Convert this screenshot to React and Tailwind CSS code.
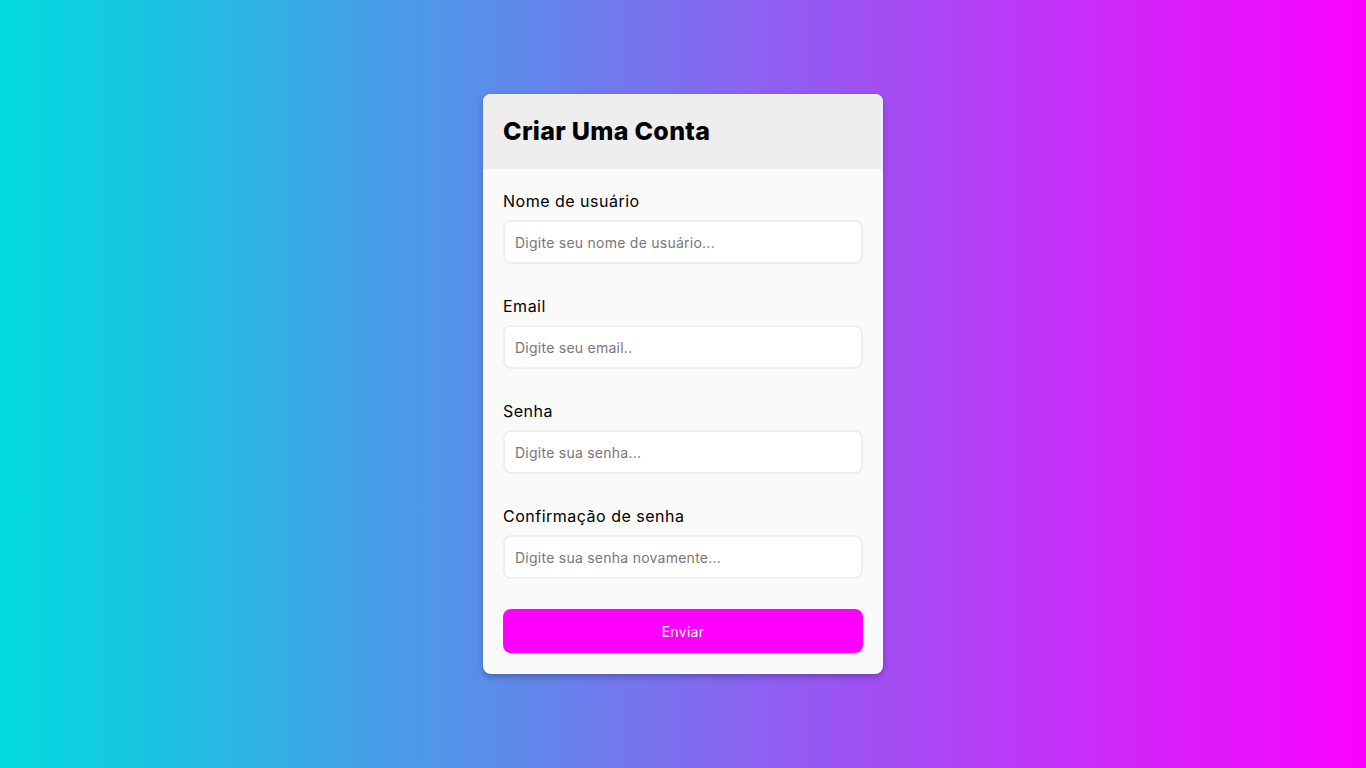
export default function App() {
  const fields = [
    { label: "Nome de usuário", ph: "Digite seu nome de usuário...", type: "text" },
    { label: "Email", ph: "Digite seu email..", type: "email" },
    { label: "Senha", ph: "Digite sua senha...", type: "password" },
    { label: "Confirmação de senha", ph: "Digite sua senha novamente...", type: "password" },
  ];
  return (
    <div
      className="w-full h-[768px] flex items-center justify-center bg-[linear-gradient(to_right,#00dbde,#fc00ff)]"
      style={{ fontFamily: "Inter, 'Noto Sans', sans-serif" }}
    >
      <div className="w-[400px] rounded-lg overflow-hidden bg-[#fafafa] shadow-[0_3px_6px_rgba(0,0,0,0.25)]">
        <div className="h-[75px] bg-[#eeeeee] flex items-center px-5">
          <h1 className="text-[25px] font-extrabold text-black tracking-[0.3px]">Criar Uma Conta</h1>
        </div>
        <form className="px-5 pt-5 pb-[21px] flex flex-col">
          {fields.map((f) => (
            <div key={f.label} className="flex flex-col mb-[30px]">
              <label className="text-[16px] leading-6 text-black mb-[7px] tracking-[0.5px]">{f.label}</label>
              <input
                type={f.type}
                placeholder={f.ph}
                className="h-[44px] w-full rounded-lg border-2 border-[#eeeeee] bg-white px-[10px] text-[14px] tracking-[0.25px] text-black placeholder:text-[#777777] outline-none"
              />
            </div>
          ))}
          <button type="button" className="h-[44px] w-full rounded-lg bg-[#ff00ff] text-white text-[14px] tracking-[0.3px]">
            Enviar
          </button>
        </form>
      </div>
    </div>
  );
}
